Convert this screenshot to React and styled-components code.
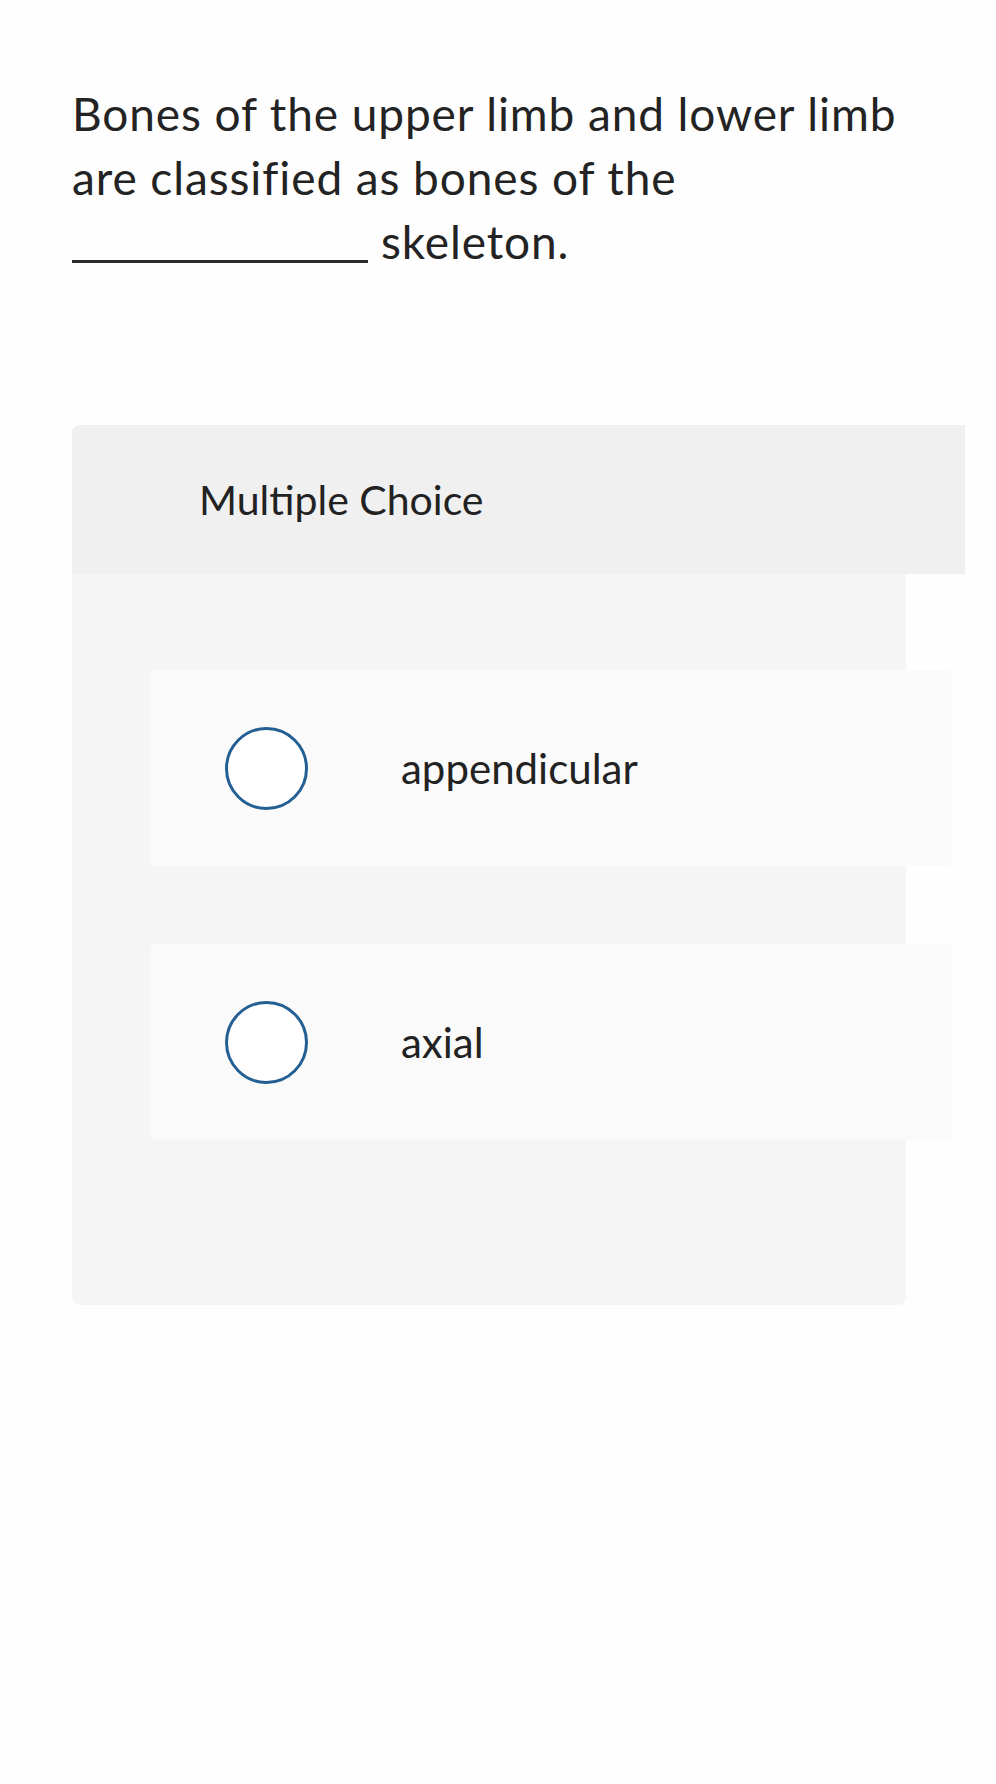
import styled, { createGlobalStyle } from "styled-components";

const GlobalStyle = createGlobalStyle`
  html, body {
    margin: 0;
    padding: 0;
    background: #fefefe;
  }
  body {
    font-family: "Lato", "Open Sans", sans-serif;
    color: #222222;
    -webkit-font-smoothing: antialiased;
  }
`;

const Page = styled.main`
  width: 996px;
  min-height: 1784px;
  box-sizing: border-box;
  padding: 82px 72px 0 72px;
`;

const Question = styled.p`
  margin: 0;
  max-width: 845px;
  font-size: 46px;
  line-height: 64px;
  letter-spacing: 0.9px;
  font-weight: 400;
  color: #232323;
`;

const Blank = styled.span`
  display: inline-block;
  width: 296px;
  height: 1em;
  border-bottom: 3px solid #2a2a2a;
  vertical-align: -4px;
  margin-right: 13px;
`;

const Panel = styled.section`
  margin-top: 151px;
  width: 893px;
`;

const PanelHeader = styled.div`
  height: 149px;
  display: flex;
  align-items: center;
  padding-left: 127px;
  background: #f0f0f0;
  border-top-left-radius: 8px;
  font-size: 41px;
  color: #222222;
`;

const PanelBody = styled.div`
  width: 834px;
  box-sizing: border-box;
  padding: 96px 0 165px 78px;
  background: #f5f5f5;
  border-bottom-left-radius: 8px;
  border-bottom-right-radius: 8px;
  display: flex;
  flex-direction: column;
  gap: 78px;
`;

const Option = styled.label`
  width: 802px;
  height: 196px;
  flex-shrink: 0;
  box-sizing: border-box;
  display: flex;
  align-items: center;
  padding-left: 75px;
  background: #fafafa;
  border-radius: 6px;
  cursor: pointer;
`;

const Radio = styled.span`
  width: 83px;
  height: 83px;
  box-sizing: border-box;
  border-radius: 50%;
  border: 3px solid #245f94;
  background: #ffffff;
  flex-shrink: 0;
`;

const OptionText = styled.span`
  margin-left: 93px;
  font-size: 42px;
  color: #222222;
`;

const choices = ["appendicular", "axial"];

const App = () => {
  return (
    <>
      <GlobalStyle />
      <Page>
        <Question>
          Bones of the upper limb and lower limb are classified as bones of the{" "}
          <Blank />
          skeleton.
        </Question>
        <Panel>
          <PanelHeader>Multiple Choice</PanelHeader>
          <PanelBody>
            {choices.map((choice) => (
              <Option key={choice}>
                <Radio />
                <OptionText>{choice}</OptionText>
              </Option>
            ))}
          </PanelBody>
        </Panel>
      </Page>
    </>
  );
};

export default App;
